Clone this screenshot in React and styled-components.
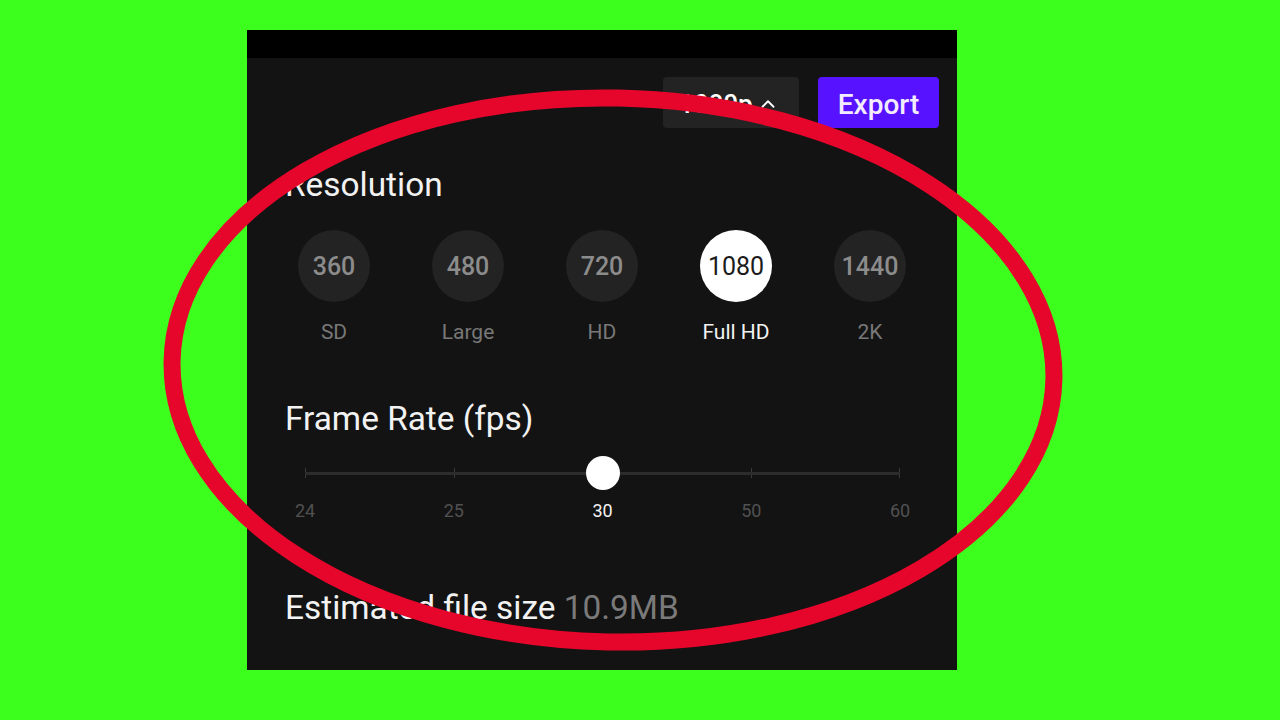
import React from "react";
import styled, { createGlobalStyle } from "styled-components";
import { ChevronUp } from "lucide-react";

const GlobalStyle = createGlobalStyle`
  html, body {
    margin: 0;
    padding: 0;
    background: #3dff1d;
  }
  body {
    font-family: Roboto, "Noto Sans", "Liberation Sans", sans-serif;
    -webkit-font-smoothing: antialiased;
  }
`;

const resolutions = [
    { value: "360", label: "SD" },
    { value: "480", label: "Large" },
    { value: "720", label: "HD" },
    { value: "1080", label: "Full HD" },
    { value: "1440", label: "2K" },
];

const frameRates = ["24", "25", "30", "50", "60"];

const App = () => {
    const selectedRes = "1080";
    const selectedFps = "30";
    const fpsIndex = frameRates.indexOf(selectedFps);

    return (
        <>
            <GlobalStyle />
            <Page>
                <Panel>
                    <TopStrip />
                    {/* header buttons */}
                    <Header>
                        <QualityButton>
                            1080p
                            <ChevronUp size={22} strokeWidth={2} />
                        </QualityButton>
                        <ExportButton>Export</ExportButton>
                    </Header>

                    {/* Resolution */}
                    <SectionTitle $top={37}>Resolution</SectionTitle>
                    <ResGrid>
                        {resolutions.map((r) => (
                            <ResItem key={r.value}>
                                <ResCircle $active={r.value === selectedRes}>{r.value}</ResCircle>
                                <ResLabel $active={r.value === selectedRes}>{r.label}</ResLabel>
                            </ResItem>
                        ))}
                    </ResGrid>

                    {/* Frame rate */}
                    <SectionTitle $top={55}>Frame Rate (fps)</SectionTitle>
                    <Slider>
                        <Track>
                            {frameRates.map((f) => (
                                <Tick key={f} />
                            ))}
                            <Thumb style={{ left: `${(fpsIndex / (frameRates.length - 1)) * 100}%` }} />
                        </Track>
                    </Slider>
                    <FpsLabels>
                        {frameRates.map((f) => (
                            <FpsLabel key={f} $active={f === selectedFps}>{f}</FpsLabel>
                        ))}
                    </FpsLabels>

                    <SectionTitle $top={66}>
                        Estimated file size <Muted>10.9MB</Muted>
                    </SectionTitle>
                </Panel>
                <Overlay viewBox="0 0 1280 720" width="1280" height="720">
                    <ellipse
                        cx="613"
                        cy="370"
                        rx="441"
                        ry="272"
                        fill="none"
                        stroke="#e6062b"
                        strokeWidth="17"
                        transform="rotate(1.2 613 370)"
                    />
                </Overlay>
            </Page>
        </>
    );
};

const Page = styled.div`
    position: relative;
    width: 1280px;
    height: 720px;
    box-sizing: border-box;
    padding: 30px 0 0 247px;
    overflow: hidden;
`;

const Panel = styled.div`
    width: 710px;
    height: 640px;
    background: #131313;
    display: flex;
    flex-direction: column;
`;

const TopStrip = styled.div`
    height: 28px;
    background: #000;
`;

const Header = styled.header`
    display: flex;
    justify-content: flex-end;
    gap: 19px;
    padding: 19px 18px 0;
`;

const QualityButton = styled.button`
    display: flex;
    align-items: center;
    gap: 4px;
    width: 136px;
    height: 51px;
    padding: 2px 0 0 16px;
    border: none;
    border-radius: 4px;
    background: #232323;
    color: #fff;
    font-family: inherit;
    font-size: 26px;
    font-weight: 500;
`;

const ExportButton = styled.button`
    width: 121px;
    height: 51px;
    padding: 3px 0 0;
    border: none;
    border-radius: 4px;
    background: #5712ff;
    color: #f3ecff;
    font-family: inherit;
    font-size: 28px;
    font-weight: 500;
`;

const SectionTitle = styled.h2`
    margin: ${(p) => p.$top}px 0 0;
    padding-left: 38px;
    font-size: 33.4px;
    line-height: 40px;
    font-weight: 400;
    color: #f2f2f2;
`;

const Muted = styled.span`
    color: #7a7a7a;
`;

const ResGrid = styled.div`
    display: grid;
    grid-template-columns: repeat(5, 134px);
    padding: 25px 20px 0;
`;

const ResItem = styled.div`
    display: flex;
    flex-direction: column;
    align-items: center;
    gap: 18px;
`;

const ResCircle = styled.div`
    width: 72px;
    height: 72px;
    border-radius: 50%;
    display: flex;
    align-items: center;
    justify-content: center;
    background: ${(p) => (p.$active ? "#fff" : "#232323")};
    color: ${(p) => (p.$active ? "#1c1c1c" : "#8c8c8c")};
    font-size: 25px;
    font-weight: ${(p) => (p.$active ? 400 : 500)};
`;

const ResLabel = styled.div`
    font-size: 21px;
    line-height: 24px;
    color: ${(p) => (p.$active ? "#f2f2f2" : "#787878")};
`;

const Slider = styled.div`
    margin: 17px 0 0 58px;
    width: 595px;
    height: 34px;
    display: flex;
    align-items: center;
`;

const Track = styled.div`
    position: relative;
    flex: 1;
    height: 10px;
    display: flex;
    justify-content: space-between;
    align-items: center;
    &::before {
        content: "";
        position: absolute;
        left: 0;
        right: 0;
        top: 4px;
        height: 3px;
        background: #2c2c2c;
    }
`;

const Tick = styled.div`
    width: 1px;
    height: 10px;
    background: #3a3a3a;
`;

const Thumb = styled.div`
    position: absolute;
    top: 50%;
    width: 34px;
    height: 34px;
    border-radius: 50%;
    background: #fff;
    transform: translate(-50%, -50%);
`;

const FpsLabels = styled.div`
    margin: 10px 0 0 38px;
    width: 635px;
    display: flex;
    justify-content: space-between;
`;

const FpsLabel = styled.div`
    width: 40px;
    text-align: center;
    font-size: 18px;
    line-height: 22px;
    color: ${(p) => (p.$active ? "#f2f2f2" : "#515151")};
`;

const Overlay = styled.svg`
    position: absolute;
    left: 0;
    top: 0;
    pointer-events: none;
`;

export default App;
